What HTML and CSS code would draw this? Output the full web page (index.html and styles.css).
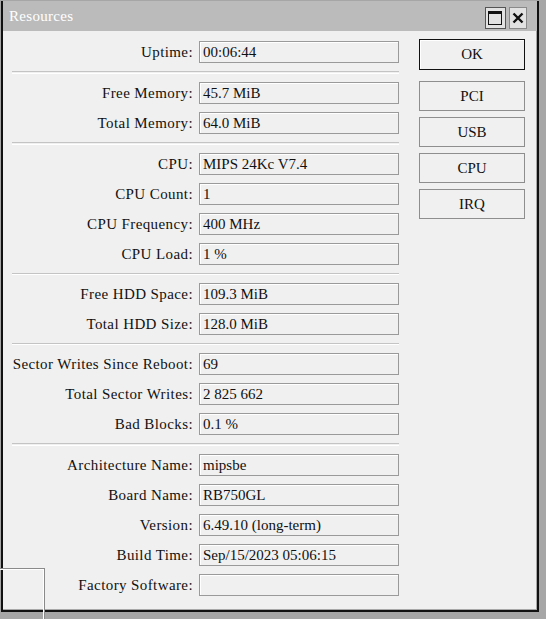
FILE: index.html
```html
<!DOCTYPE html>
<html>
<head>
<meta charset="utf-8">
<link rel="stylesheet" href="styles.css">
</head>
<body>
<div class="window">
  <div class="titlebar">
    <span class="title">Resources</span>
    <div class="tb-buttons">
      <span class="tb-btn tb-max">
        <svg width="21" height="22" viewBox="0 0 21 22"><rect x="3.5" y="4.5" width="13" height="13" fill="none" stroke="#111" stroke-width="1"/><rect x="4" y="5" width="12" height="2" fill="#111"/></svg>
      </span>
      <span class="tb-btn tb-close">
        <svg width="18" height="22" viewBox="0 0 18 22"><path d="M4.5 6.5 L13.5 15.5 M13.5 6.5 L4.5 15.5" stroke="#111" stroke-width="2.4"/></svg>
      </span>
    </div>
  </div>
  <div class="body">
    <div class="form">
      <div class="row"><span class="label">Uptime:</span><span class="field">00:06:44</span></div>
      <div class="sep"></div>
      <div class="row"><span class="label">Free Memory:</span><span class="field">45.7 MiB</span></div>
      <div class="row"><span class="label">Total Memory:</span><span class="field">64.0 MiB</span></div>
      <div class="sep"></div>
      <div class="row"><span class="label">CPU:</span><span class="field">MIPS 24Kc V7.4</span></div>
      <div class="row"><span class="label">CPU Count:</span><span class="field">1</span></div>
      <div class="row"><span class="label">CPU Frequency:</span><span class="field">400 MHz</span></div>
      <div class="row"><span class="label">CPU Load:</span><span class="field">1 %</span></div>
      <div class="sep sep-thin"></div>
      <div class="row"><span class="label">Free HDD Space:</span><span class="field">109.3 MiB</span></div>
      <div class="row"><span class="label">Total HDD Size:</span><span class="field">128.0 MiB</span></div>
      <div class="sep sep-thin"></div>
      <div class="row"><span class="label">Sector Writes Since Reboot:</span><span class="field">69</span></div>
      <div class="row"><span class="label">Total Sector Writes:</span><span class="field">2 825 662</span></div>
      <div class="row"><span class="label">Bad Blocks:</span><span class="field">0.1 %</span></div>
      <div class="sep"></div>
      <div class="row"><span class="label">Architecture Name:</span><span class="field">mipsbe</span></div>
      <div class="row"><span class="label">Board Name:</span><span class="field">RB750GL</span></div>
      <div class="row"><span class="label">Version:</span><span class="field">6.49.10 (long-term)</span></div>
      <div class="row"><span class="label">Build Time:</span><span class="field">Sep/15/2023 05:06:15</span></div>
      <div class="row"><span class="label">Factory Software:</span><span class="field"></span></div>
    </div>
    <div class="buttons">
      <button class="btn btn-default">OK</button>
      <button class="btn">PCI</button>
      <button class="btn">USB</button>
      <button class="btn">CPU</button>
      <button class="btn">IRQ</button>
    </div>
  </div>
</div>
<div class="ghost"></div>
</body>
</html>
```
FILE: styles.css
```css
body {
  margin: 0;
  padding: 0;
  background: #a6a6a6;
  height: 619px;
  overflow: hidden;
  position: relative;
  font-family: "Liberation Serif", serif;
  font-size: 15px;
  color: #111;
}
.window {
  margin-left: 1px;
  width: 538px;
  box-sizing: border-box;
  border-left: 2px solid #111;
  border-right: 2px solid #111;
  border-bottom: 2px solid #111;
  background: #f0f0f0;
  font-family: "Liberation Serif", serif;
}
.titlebar {
  height: 30px;
  margin-top: 1px;
  background: #bbbbbb;
  display: flex;
  align-items: center;
  justify-content: space-between;
  padding: 0 10px 0 6px;
}
.title {
  color: #fff;
  font-family: "Liberation Serif", serif;
  font-size: 15px;
  letter-spacing: 0.3px;
}
.tb-buttons {
  display: flex;
  gap: 3px;
  margin-top: 3px;
}
.tb-btn {
  display: block;
  box-sizing: border-box;
  height: 22px;
  border: 1px solid #555;
  background: #e2e2e2;
}
.tb-btn svg { display: block; margin: -1px; }
.tb-max { width: 21px; }
.tb-close { width: 18px; border-color: #8a8a8a; }
.body {
  display: flex;
  align-items: flex-start;
  border-right: 1px solid #a8a8a8;
  border-bottom: 1px solid #a8a8a8;
  height: 579px;
  box-sizing: border-box;
  padding-left: 9px;
}
.form {
  display: flex;
  flex-direction: column;
  gap: 8px;
  margin-top: 10px;
  width: 387px;
}
.row {
  display: flex;
  align-items: center;
  height: 22px;
}
.label {
  width: 181px;
  text-align: right;
  white-space: nowrap;
  font-family: "Liberation Serif", serif;
  font-size: 15px;
  letter-spacing: 0.4px;
}
.field {
  margin-left: 6px;
  width: 200px;
  height: 22px;
  box-sizing: border-box;
  border: 1px solid #9a9a9a;
  box-shadow: inset 1px 1px 0 #fff;
  padding: 0 3px;
  line-height: 20px;
  white-space: nowrap;
  font-family: "Liberation Serif", serif;
  font-size: 15px;
}
.sep {
  height: 1px;
  border-top: 1px solid #c4c4c4;
  border-bottom: 1px solid #fff;
}
.sep-thin {
  height: 0;
}
.buttons {
  display: flex;
  flex-direction: column;
  gap: 6px;
  margin-top: 8px;
  margin-left: 20px;
}
.btn {
  width: 106px;
  height: 30px;
  box-sizing: border-box;
  border: 1px solid #8e8e8e;
  background: #f0f0f0;
  font-family: "Liberation Serif", serif;
  font-size: 15px;
  color: #111;
  padding: 0;
}
.btn-default {
  height: 31px;
  border: 1px solid #111;
  box-shadow: inset 1px 1px 0 #fff;
  margin-bottom: 5px;
}
.ghost {
  position: absolute;
  left: -2px;
  top: 568px;
  width: 46px;
  height: 60px;
  border-top: 1px solid #8a8a8a;
  border-right: 1px solid #8a8a8a;
}
.ghost::before {
  content: "";
  position: absolute;
  left: 0;
  top: 0;
  right: 0;
  bottom: 0;
  border-top: 1px solid #fff;
  border-right: 1px solid #fff;
}
```
